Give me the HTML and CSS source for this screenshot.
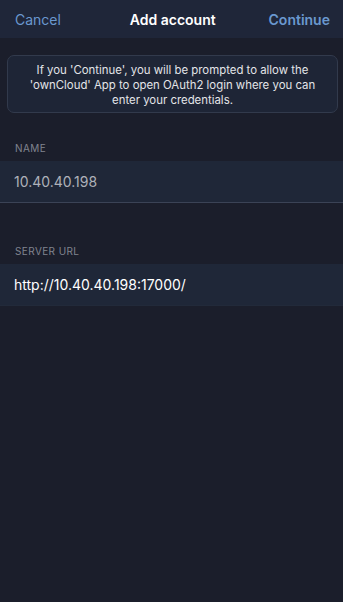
FILE: index.html
```html
<!DOCTYPE html>
<html lang="en">
<head>
    <title>Add account</title>
    <meta charset="utf-8" />
    <meta name="viewport" content="width=device-width, initial-scale=1.0" />
    <link rel="stylesheet" href="styles.css">
</head>
<body>
<!--nav bar-->
<div class="nav-bar">
    <a href="" class="nav-btn">Cancel</a>
    <span class="nav-title">Add account</span>
    <a href="" class="nav-btn nav-strong">Continue</a>
</div>

<!--info-->
<div class="info-box">
    If you 'Continue', you will be prompted to allow the 'ownCloud' App to open OAuth2 login where you can enter your credentials.
</div>

<!--name-->
<div class="section">
    <div class="section-label">NAME</div>
    <div class="field field-name">10.40.40.198</div>
</div>

<!--server url-->
<div class="section section-url">
    <div class="section-label">SERVER URL</div>
    <div class="field field-url">http://10.40.40.198:17000/</div>
</div>
</body>
</html>
```

FILE: styles.css
```css
html,body{margin:0;padding:0;}
body{
    background-color:#1b1e2b;
    font-family:Inter,"Liberation Sans",sans-serif;
    min-height:602px;
}
/*nav*/
.nav-bar{
    display:flex;
    align-items:center;
    justify-content:space-between;
    height:38px;
    padding:0 13px 0 15px;
    background-color:#1f2639;
}
.nav-btn{
    color:#6a98cf;
    text-decoration:none;
    font-size:14px;
}
.nav-strong{font-weight:600;}
.nav-title{
    color:#fff;
    font-size:14px;
    font-weight:600;
    margin-left:16px;
}
/*info*/
.info-box{
    margin:17px 5px 0 7px;
    padding:7px 10px 4px;
    border:1px solid #323a4c;
    border-radius:7px;
    background-color:#1e2536;
    color:#e3e4e8;
    font-size:11.4px;
    line-height:15px;
    text-align:center;
}
/*sections*/
.section{margin-top:29px;}
.section-url{margin-top:42px;}
.section-label{
    height:12px;
    line-height:12px;
    padding:0 15px 7px;
    font-size:10px;
    color:#80848f;
    letter-spacing:0.4px;
}
.field{
    height:41px;
    line-height:41px;
    padding:0 14px;
    background-color:#1f2738;
    font-size:14px;
}
.field-name{
    color:#aeb1b9;
    border-bottom:1px solid #3b4356;
}
.field-url{
    color:#fff;
    border-bottom:1px solid #222a3a;
}
```
